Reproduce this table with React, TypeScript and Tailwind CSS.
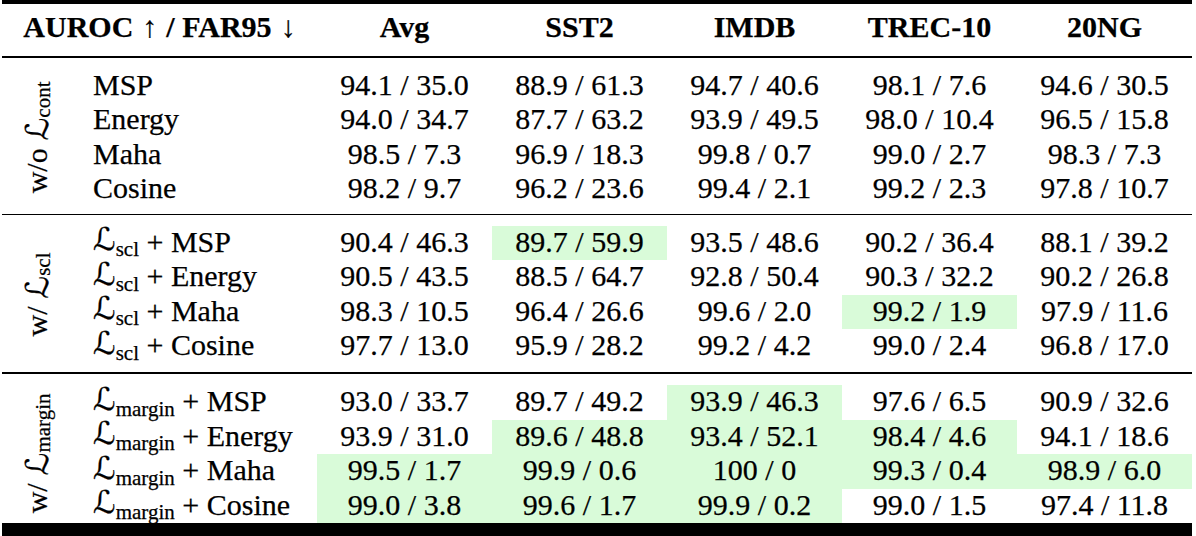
import React from "react";

type Row = { m: string; v: string[]; hl: number[] };
type Group = { pre: string; sub: string; rows: Row[] };

const groups: Group[] = [
  {
    pre: "w/o",
    sub: "cont",
    rows: [
      { m: "MSP", v: ["94.1 / 35.0", "88.9 / 61.3", "94.7 / 40.6", "98.1 / 7.6", "94.6 / 30.5"], hl: [] },
      { m: "Energy", v: ["94.0 / 34.7", "87.7 / 63.2", "93.9 / 49.5", "98.0 / 10.4", "96.5 / 15.8"], hl: [] },
      { m: "Maha", v: ["98.5 / 7.3", "96.9 / 18.3", "99.8 / 0.7", "99.0 / 2.7", "98.3 / 7.3"], hl: [] },
      { m: "Cosine", v: ["98.2 / 9.7", "96.2 / 23.6", "99.4 / 2.1", "99.2 / 2.3", "97.8 / 10.7"], hl: [] },
    ],
  },
  {
    pre: "w/",
    sub: "scl",
    rows: [
      { m: "MSP", v: ["90.4 / 46.3", "89.7 / 59.9", "93.5 / 48.6", "90.2 / 36.4", "88.1 / 39.2"], hl: [1] },
      { m: "Energy", v: ["90.5 / 43.5", "88.5 / 64.7", "92.8 / 50.4", "90.3 / 32.2", "90.2 / 26.8"], hl: [] },
      { m: "Maha", v: ["98.3 / 10.5", "96.4 / 26.6", "99.6 / 2.0", "99.2 / 1.9", "97.9 / 11.6"], hl: [3] },
      { m: "Cosine", v: ["97.7 / 13.0", "95.9 / 28.2", "99.2 / 4.2", "99.0 / 2.4", "96.8 / 17.0"], hl: [] },
    ],
  },
  {
    pre: "w/",
    sub: "margin",
    rows: [
      { m: "MSP", v: ["93.0 / 33.7", "89.7 / 49.2", "93.9 / 46.3", "97.6 / 6.5", "90.9 / 32.6"], hl: [2] },
      { m: "Energy", v: ["93.9 / 31.0", "89.6 / 48.8", "93.4 / 52.1", "98.4 / 4.6", "94.1 / 18.6"], hl: [1, 2, 3] },
      { m: "Maha", v: ["99.5 / 1.7", "99.9 / 0.6", "100 / 0", "99.3 / 0.4", "98.9 / 6.0"], hl: [0, 1, 2, 3, 4] },
      { m: "Cosine", v: ["99.0 / 3.8", "99.6 / 1.7", "99.9 / 0.2", "99.0 / 1.5", "97.4 / 11.8"], hl: [0, 1, 2] },
    ],
  },
];

const heads = ["Avg", "SST2", "IMDB", "TREC-10", "20NG"];

function L({ sub }: { sub: string }) {
  return (
    <span className="whitespace-nowrap">
      <span className="font-['DejaVu_Serif','DejaVu_Sans',serif] italic text-[1.05em]">ℒ</span>
      <span className="text-[0.7em] align-[-0.3em]">{sub}</span>
    </span>
  );
}

function GroupBlock({ g, idx }: { g: Group; idx: number }) {
  const pt = idx === 0 ? "pt-[11px]" : idx === 1 ? "pt-[10.5px]" : "pt-[11.5px]";
  const pb = idx === 0 ? "pb-[7px]" : idx === 1 ? "pb-[8.5px]" : "pb-0";
  return (
    <div className={`flex ${pt} ${pb}`}>
      <div className="w-[73px] flex items-center justify-center">
        <div className="[writing-mode:vertical-rl] rotate-180 whitespace-nowrap leading-none">
          {g.pre} <L sub={g.sub} />
        </div>
      </div>
      <div className="flex flex-col">
        {g.rows.map((r, ri) => (
          <div key={ri} className="flex h-[34.5px]">
            <div className="w-[242px] pl-[18px] flex items-center pb-[3px] whitespace-nowrap">
              {idx === 0 ? (
                r.m
              ) : (
                <>
                  <L sub={g.sub} />
                  <span>&nbsp;+ {r.m}</span>
                </>
              )}
            </div>
            {r.v.map((v, ci) => (
              <div
                key={ci}
                className={`w-[175px] flex items-center justify-center pb-[3px] whitespace-pre ${
                  r.hl.includes(ci) ? "bg-[#d9fbd9]" : ""
                }`}
              >
                {v}
              </div>
            ))}
          </div>
        ))}
      </div>
    </div>
  );
}

export default function App() {
  return (
    <div className="w-[1196px] h-[536px] bg-white text-black font-['Liberation_Serif','DejaVu_Serif',serif] text-[30px] [-webkit-text-stroke:0.25px_black] overflow-hidden">
      <div className="ml-[2px] w-[1190px] flex flex-col">
        <div className="h-[3.5px] bg-black" />
        <div className="h-[52.5px] flex font-bold pb-[6px]">
          <div className="w-[315px] flex items-center justify-center whitespace-nowrap">
            AUROC <span className="font-normal mx-[9px]">↑</span> / FAR95{" "}
            <span className="font-normal ml-[9px]">↓</span>
          </div>
          {heads.map((h) => (
            <div key={h} className="w-[175px] flex items-center justify-center">
              {h}
            </div>
          ))}
        </div>
        <div className="h-[1.5px] bg-black" />
        <GroupBlock g={groups[0]} idx={0} />
        <div className="h-[1.5px] bg-black" />
        <GroupBlock g={groups[1]} idx={1} />
        <div className="h-[1.5px] bg-black" />
        <GroupBlock g={groups[2]} idx={2} />
        <div className="h-[13px] bg-black" />
      </div>
    </div>
  );
}
